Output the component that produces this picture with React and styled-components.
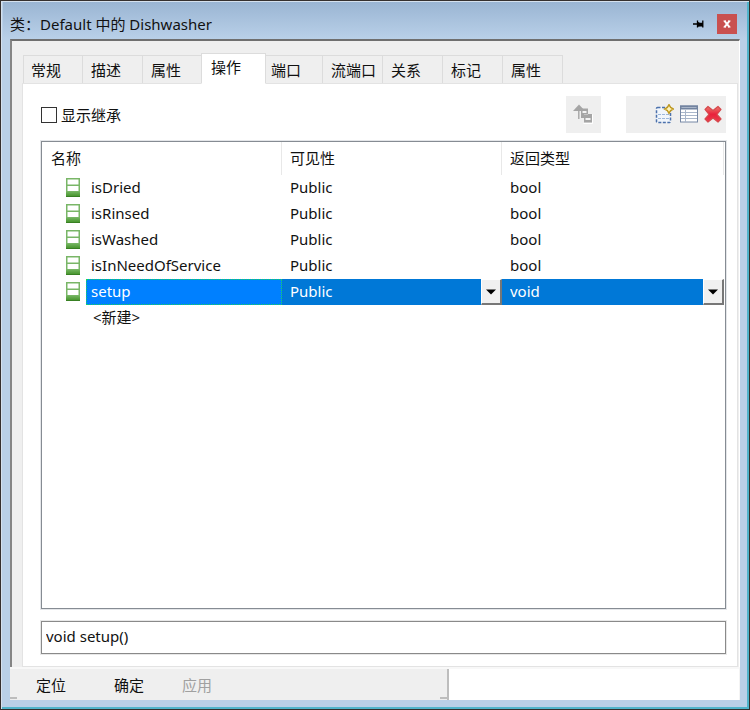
import { useState } from "react";
import styled, { createGlobalStyle } from "styled-components";

const GlobalStyle = createGlobalStyle`
    * {
        box-sizing: border-box;
    }
    body {
        margin: 0;
        color: #111;
        font-family: "Noto Sans", "Noto Sans CJK SC", sans-serif;
        font-size: 15px;
        line-height: 20px;
    }
    button, input, select {
        margin: 0;
        font: inherit;
        color: inherit;
    }
`;

const Window = styled.div`
    display: flex;
    flex-direction: column;
    min-height: 100vh;
    padding: 1px 9px 9px;
    border: 1px solid #35302f;
    background: #b9d0e8;
    box-shadow: inset 1px 1px 0 #d5e1ee, inset -2px -2px 0 #4fb4cb;
`;
const TitleBar = styled.header`
    display: flex;
    align-items: center;
    height: 37px;
    margin: 0 -7px;
    padding: 6px 10px 0 7px;
    background: linear-gradient(#9ab5d3, #b9d0e8);
`;
const Title = styled.h1`
    flex: 1;
    margin: 0;
    font-size: 15px;
    font-weight: normal;
`;
const PinButton = styled.button`
    display: flex;
    margin-right: 12px;
    padding: 0;
    border: 0 none;
    background: none;
`;
const CloseButton = styled.button`
    display: flex;
    align-items: center;
    justify-content: center;
    width: 20px;
    height: 20px;
    padding: 0;
    border: 0 none;
    background: #c9504f;
`;
const Body = styled.main`
    flex: 1;
    display: flex;
    flex-direction: column;
    padding: 12px 1px 0 11px;
    border-top: 2px solid #6f6f6f;
    border-left: 2px solid #858585;
    border-right: 1px solid #fff;
    background: #efefef;
`;
const TabList = styled.div`
    display: flex;
    align-items: flex-end;
    margin-bottom: -1px;
`;
const Tab = styled.button`
    width: 60px;
    height: 29px;
    padding: 0 0 0 8px;
    border: 1px solid #dcdcdc;
    border-left: 0 none;
    background: #efefef;
    text-align: left;
    white-space: nowrap;

    &:first-child {
        border-left: 1px solid #dcdcdc;
        padding-left: 7px;
    }
    &[aria-selected="true"] {
        z-index: 1;
        width: 65px;
        height: 31px;
        margin: 0 -3px 0 -2px;
        padding: 0 0 4px 9px;
        border-left: 1px solid #dcdcdc;
        border-bottom-color: #fff;
        background: #fff;
    }
`;
const Page = styled.section`
    flex: 1;
    display: flex;
    flex-direction: column;
    padding: 12px 11px 12px 18px;
    margin-left: -1px;
    border: 1px solid #e3e3e3;
    background: #fff;
`;
const Toolbar = styled.div`
    display: flex;
    align-items: center;
    margin-bottom: 8px;
`;
const CheckLabel = styled.label`
    flex: 1;
    display: flex;
    align-items: center;
    gap: 4px;
`;
const CheckBox = styled.input`
    appearance: none;
    width: 16px;
    height: 16px;
    border: 1px solid #333;
    background: #fff;

    &:checked {
        background: #0078d7;
        box-shadow: inset 0 0 0 3px #fff;
    }
`;
const ToolGroup = styled.div`
    display: flex;
    align-items: center;
    justify-content: flex-end;
    gap: 6px;
    width: ${(props) => (props.$wide ? "100px" : "35px")};
    height: 37px;
    margin-left: ${(props) => (props.$wide ? "25px" : "0")};
    padding: 0 ${(props) => (props.$wide ? "4px" : "8px")} 2px;
    background: #efefef;
`;
const ToolButton = styled.button`
    display: flex;
    padding: 0;
    border: 0 none;
    background: none;
`;
const ListBox = styled.div`
    flex: 1;
    padding-right: 1px;
    border: 1px solid #868c93;
    box-shadow: 0 0 0 1px #e4e6e9;
`;
const Table = styled.table`
    width: 100%;
    border-collapse: separate;
    border-spacing: 0;
    table-layout: fixed;
`;
const Th = styled.th`
    width: ${(props) => props.$width};
    height: 33px;
    padding: 0 0 2px ${(props) => (props.$first ? "9px" : "8px")};
    border-right: 1px solid #e8e8e8;
    font-weight: normal;
    text-align: left;
`;
const Td = styled.td`
    height: 26px;
    padding: 0 0 0 8px;
    background: ${(props) => (props.$active ? "#0078d7" : "#fff")};
    color: ${(props) => (props.$active ? "#fff" : "inherit")};
    line-height: 24px;
    vertical-align: top;
`;
const NameTd = styled.td`
    height: 26px;
    padding: 0 0 0 24px;
`;
const NameCell = styled.div`
    display: flex;
    align-items: center;
    gap: 6px;
`;
const Name = styled.span`
    flex: 1;
    height: 26px;
    padding-left: 4px;
    border: 1px dotted ${(props) => (props.$active ? "#14d95c" : "transparent")};
    background: ${(props) => (props.$active ? "#0080ff" : "transparent")};
    color: ${(props) => (props.$active ? "#fff" : "inherit")};
    line-height: 22px;
`;
const NewTd = styled.td`
    height: 26px;
    padding: 0 0 2px 51px;
`;
const SelectBox = styled.div`
    position: relative;
    display: flex;
`;
const Select = styled.select`
    appearance: none;
    width: 100%;
    height: 26px;
    padding: 0 0 2px;
    border: 0 none;
    outline: 0 none;
    background: transparent;

    option {
        color: #111;
    }
`;
const Arrow = styled.span`
    position: absolute;
    top: 0;
    right: 0;
    display: flex;
    align-items: center;
    justify-content: center;
    width: 21px;
    height: 26px;
    border: 1px solid #fff;
    border-right: 2px solid #777;
    border-bottom: 2px solid #777;
    background: #f0f0f0;
    pointer-events: none;
`;
const Signature = styled.input`
    width: 100%;
    height: 33px;
    margin-top: 12px;
    padding: 0 4px 4px;
    border: 1px solid #8a8a8a;
    outline: 0 none;
    box-shadow: 0 0 0 1px #e8e8e8;
`;
const Footer = styled.footer`
    display: flex;
    height: 33px;
    border-top: 2px solid #f8f8f8;
    border-right: 1px solid #f4f4f4;
    background: #fff;
`;
const Actions = styled.div`
    display: flex;
    gap: 18px;
    width: 439px;
    padding-left: 11px;
    border-right: 2px solid #bdbdbd;
    background:
        linear-gradient(#bdbdbd, #bdbdbd) left bottom 1px / 7px 2px no-repeat,
        linear-gradient(#bdbdbd, #bdbdbd) right bottom 1px / 7px 2px no-repeat,
        #efefef;
`;
const Action = styled.button`
    padding: 0 15px;
    border: 0 none;
    background: none;
    white-space: nowrap;

    & + & {
        margin-right: -10px;
    }
    &:disabled {
        color: #a0a0a0;
    }
`;

function PinIcon() {
    return (
        <svg width="12" height="10" viewBox="0 0 12 10" aria-hidden="true">
            <path d="M0 5h5M4.500 1.500v7M9.800 1.500v7" stroke="#000" strokeWidth="1.300" />
            <path d="M5 3l2 .8h3v3.600H7l-2 .4z" fill="#000" />
        </svg>
    );
}

function CloseIcon() {
    return (
        <svg width="8" height="8" viewBox="0 0 8 8" aria-hidden="true">
            <path d="M1.500 .8l5 6.400M6.500 .8l-5 6.400" stroke="#fff" strokeWidth="1.900" />
            <path d="M.5 1h2.400M5.100 1h2.400M.5 7h2.400M5.100 7h2.400" stroke="#fff" strokeWidth="1" />
        </svg>
    );
}

function MoveUpIcon() {
    return (
        <svg width="20" height="20" viewBox="0 0 20 20" aria-hidden="true">
            <path d="M6 .5L12 7H0z" fill="#a5a5a5" />
            <path d="M5.800 6v9" stroke="#a5a5a5" strokeWidth="1.400" />
            <path d="M8 4.500h7v5.500h4v8.500h-8V14H8z" fill="#a5a5a5" />
            <path d="M9.500 8h4M12.500 15h5" stroke="#f4f4f4" strokeWidth="1.800" />
            <path d="M11 10.500h4" stroke="#c4c4c4" />
            <path d="M10.500 19.500h9v-9" fill="none" stroke="#fff" />
        </svg>
    );
}

function NewIcon() {
    return (
        <svg width="19" height="20" viewBox="0 0 19 20" aria-hidden="true">
            <rect x="1.500" y="3.500" width="14" height="15" rx="1" fill="#f1f6fc" stroke="#4c72ad" strokeWidth="1.500" strokeDasharray="3 1.500" />
            <path d="M3 10.500h11M3 14.500h11" stroke="#9db8dc" strokeDasharray="3 1" />
            <path d="M14 .5l1.600 2.900 2.900 1.600-2.900 1.600L14 9.500l-1.600-2.900L9.500 5l2.900-1.600z" fill="#f3d96c" stroke="#bd9721" strokeWidth="1.300" />
            <path d="M14 3v4M12 5h4" stroke="#fffbe0" />
        </svg>
    );
}

function GridIcon() {
    return (
        <svg width="18" height="18" viewBox="0 0 18 18" aria-hidden="true">
            <rect x=".5" y="1" width="17" height="16" fill="#fff" stroke="#7788a5" />
            <rect x="0" y=".5" width="18" height="4" fill="#72839f" />
            <path d="M1.500 2.500h15" stroke="#a9b5c8" />
            <path d="M5.500 5v12M1 7.500h16M1 10.500h16M1 13.500h16" stroke="#a9b6ca" />
        </svg>
    );
}

function DeleteIcon() {
    return (
        <svg width="18" height="18" viewBox="0 0 18 18" aria-hidden="true">
            <defs>
                <linearGradient id="deleteFill" x1="0" y1="0" x2="0" y2="1">
                    <stop offset="0" stopColor="#eb7a6d" />
                    <stop offset=".5" stopColor="#e9213b" />
                    <stop offset="1" stopColor="#ed3b4c" />
                </linearGradient>
            </defs>
            <path
                d="M4 1.500l5 4 5-4 3 3-4 5 4 4.500-3 3-5-4-5 4-3-3 4-4.500-4-5z"
                fill="url(#deleteFill)"
                stroke="#d6494d"
                strokeWidth="1.200"
                strokeLinejoin="round"
            />
        </svg>
    );
}

function OperationIcon() {
    return (
        <svg width="14" height="20" viewBox="0 0 14 20" aria-hidden="true">
            <defs>
                <linearGradient id="operationFill" x1="0" y1="0" x2="0" y2="1">
                    <stop offset="0" stopColor="#74b561" />
                    <stop offset="1" stopColor="#409025" />
                </linearGradient>
            </defs>
            <rect x="0" y="0" width="14" height="19" fill="#79b667" />
            <rect x="1.500" y="1.500" width="11" height="5" fill="#fff" />
            <rect x="1.500" y="8" width="11" height="5" fill="#fff" />
            <rect x="0" y="13.500" width="14" height="5.500" fill="url(#operationFill)" />
            <path d="M0 18.500h14" stroke="#388023" />
        </svg>
    );
}

function Combo({ label, value, options }) {
    const [current, setCurrent] = useState(value);

    return (
        <SelectBox>
            <Select aria-label={label} value={current} onChange={(e) => setCurrent(e.target.value)}>
                {options.map((option) => (
                    <option key={option}>{option}</option>
                ))}
            </Select>
            <Arrow>
                <svg width="10" height="6" viewBox="0 0 10 6" aria-hidden="true">
                    <path d="M0 .5h10L5 5.500z" fill="#000" />
                </svg>
            </Arrow>
        </SelectBox>
    );
}

function OperationRow({ operation, isActive }) {
    const { name, visibility, returnType } = operation;

    return (
        <tr>
            <NameTd>
                <NameCell>
                    <OperationIcon />
                    <Name $active={isActive}>{name}</Name>
                </NameCell>
            </NameTd>
            <Td $active={isActive}>
                {isActive ? (
                    <Combo label="可见性" value={visibility} options={["Public", "Protected", "Private"]} />
                ) : (
                    visibility
                )}
            </Td>
            <Td $active={isActive}>
                {isActive ? (
                    <Combo label="返回类型" value={returnType} options={["void", "bool", "int"]} />
                ) : (
                    returnType
                )}
            </Td>
        </tr>
    );
}

const tabs = ["常规", "描述", "属性", "操作", "端口", "流端口", "关系", "标记", "属性"];

const operations = [
    { name: "isDried", visibility: "Public", returnType: "bool" },
    { name: "isRinsed", visibility: "Public", returnType: "bool" },
    { name: "isWashed", visibility: "Public", returnType: "bool" },
    { name: "isInNeedOfService", visibility: "Public", returnType: "bool" },
    { name: "setup", visibility: "Public", returnType: "void" },
];

function App() {
    const [tab, setTab] = useState(3);
    const [showInherited, setShowInherited] = useState(false);
    const [signature, setSignature] = useState("void setup()");

    return (
        <Window>
            <GlobalStyle />
            <TitleBar>
                <Title>类：Default 中的 Dishwasher</Title>
                <PinButton aria-label="固定">
                    <PinIcon />
                </PinButton>
                <CloseButton aria-label="关闭">
                    <CloseIcon />
                </CloseButton>
            </TitleBar>
            <Body>
                <TabList role="tablist">
                    {tabs.map((name, index) => (
                        <Tab key={index} role="tab" aria-selected={index === tab} onClick={() => setTab(index)}>
                            {name}
                        </Tab>
                    ))}
                </TabList>
                <Page role="tabpanel">
                    <Toolbar>
                        <CheckLabel>
                            <CheckBox
                                type="checkbox"
                                checked={showInherited}
                                onChange={() => setShowInherited(!showInherited)}
                            />
                            显示继承
                        </CheckLabel>
                        <ToolGroup>
                            <ToolButton aria-label="上移" disabled>
                                <MoveUpIcon />
                            </ToolButton>
                        </ToolGroup>
                        <ToolGroup $wide>
                            <ToolButton aria-label="新建">
                                <NewIcon />
                            </ToolButton>
                            <ToolButton aria-label="编辑">
                                <GridIcon />
                            </ToolButton>
                            <ToolButton aria-label="删除">
                                <DeleteIcon />
                            </ToolButton>
                        </ToolGroup>
                    </Toolbar>
                    <ListBox>
                        <Table>
                            <thead>
                                <tr>
                                    <Th $first $width="240px">名称</Th>
                                    <Th $width="220px">可见性</Th>
                                    <Th>返回类型</Th>
                                </tr>
                            </thead>
                            <tbody>
                                {operations.map((operation) => (
                                    <OperationRow
                                        key={operation.name}
                                        operation={operation}
                                        isActive={operation.name === "setup"}
                                    />
                                ))}
                                <tr>
                                    <NewTd colSpan="3">&lt;新建&gt;</NewTd>
                                </tr>
                            </tbody>
                        </Table>
                    </ListBox>
                    <Signature
                        aria-label="签名"
                        value={signature}
                        onChange={(e) => setSignature(e.target.value)}
                    />
                </Page>
            </Body>
            <Footer>
                <Actions>
                    <Action>定位</Action>
                    <Action>确定</Action>
                    <Action disabled>应用</Action>
                </Actions>
            </Footer>
        </Window>
    );
}

export default App;
